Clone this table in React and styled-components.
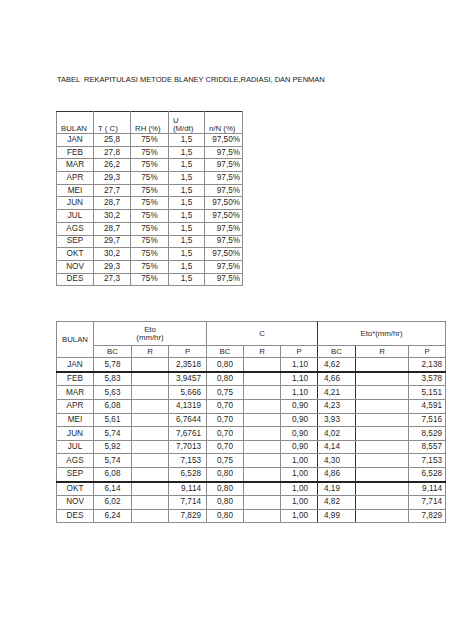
import React from 'react';
import styled, { createGlobalStyle } from 'styled-components';

const GlobalStyle = createGlobalStyle`
  html, body {
    margin: 0;
    padding: 0;
    background: #fff;
  }
  body {
    font-family: "Liberation Sans", Arial, sans-serif;
    color: #1f1f1f;
  }
`;

const Page = styled.div`
  width: 474px;
  height: 632px;
  box-sizing: border-box;
  padding: 76px 0 0 57px;
  background: #fff;
`;

const Title = styled.div`
  font-size: 7.5px;
  line-height: 8px;
  white-space: pre;
  color: #1a1a1a;
`;

const Table = styled.table`
  border-collapse: collapse;
  table-layout: fixed;
  margin-top: ${(p) => p.$top}px;
  margin-left: -1px;
  font-size: 8.2px;
  color: #1f1f1f;
  border: 1.5px solid #333;
`;

const Cell = styled.td`
  padding: 0 ${(p) => p.$pad ?? 2}px;
  height: ${(p) => p.$h}px;
  line-height: 8px;
  border: 1px solid #8c8c8c;
  text-align: ${(p) => p.$align || 'center'};
  vertical-align: ${(p) => p.$valign || 'middle'};
  white-space: nowrap;
  overflow: hidden;
  ${(p) => p.$thickBottom && 'border-bottom: 2px solid #222;'}
  ${(p) => p.$thickRight && 'border-right: 1.5px solid #333;'}
  ${(p) => p.$thickTop && 'border-top: 1.5px solid #333;'}
`;

const Head = styled(Cell)`
  font-size: 7.8px;
  color: #2a2a2a;
`;

const months = ['JAN', 'FEB', 'MAR', 'APR', 'MEI', 'JUN', 'JUL', 'AGS', 'SEP', 'OKT', 'NOV', 'DES'];

const topRows = [
  ['25,8', '75%', '1,5', '97,50%'],
  ['27,8', '75%', '1,5', '97,5%'],
  ['26,2', '75%', '1,5', '97,5%'],
  ['29,3', '75%', '1,5', '97,5%'],
  ['27,7', '75%', '1,5', '97,5%'],
  ['28,7', '75%', '1,5', '97,50%'],
  ['30,2', '75%', '1,5', '97,50%'],
  ['28,7', '75%', '1,5', '97,5%'],
  ['29,7', '75%', '1,5', '97,5%'],
  ['30,2', '75%', '1,5', '97,50%'],
  ['29,3', '75%', '1,5', '97,5%'],
  ['27,3', '75%', '1,5', '97,5%'],
];

const bottomRows = [
  ['5,78', '2,3518', '0,80', '1,10', '4,62', '2,138'],
  ['5,83', '3,9457', '0,80', '1,10', '4,66', '3,578'],
  ['5,63', '5,666', '0,75', '1,10', '4,21', '5,151'],
  ['6,08', '4,1319', '0,70', '0,90', '4,23', '4,591'],
  ['5,61', '6,7644', '0,70', '0,90', '3,93', '7,516'],
  ['5,74', '7,6761', '0,70', '0,90', '4,02', '8,529'],
  ['5,92', '7,7013', '0,70', '0,90', '4,14', '8,557'],
  ['5,74', '7,153', '0,75', '1,00', '4,30', '7,153'],
  ['6,08', '6,528', '0,80', '1,00', '4,86', '6,528'],
  ['6,14', '9,114', '0,80', '1,00', '4,19', '9,114'],
  ['6,02', '7,714', '0,80', '1,00', '4,82', '7,714'],
  ['6,24', '7,829', '0,80', '1,00', '4,99', '7,829'],
];

const topCols = [37, 37, 38, 36, 38];
const bottomCols = [37, 38, 37, 38, 37, 37, 37, 38, 53, 37];

function SummaryTable() {
  return (
    <Table $top={27}>
      <colgroup>
        {topCols.map((w, i) => <col key={i} style={{ width: w }} />)}
      </colgroup>
      <tbody>
        <tr>
          <Head $h={21} $valign="bottom" $align="left" $pad={4} $thickTop>BULAN</Head>
          <Head $h={21} $valign="bottom" $align="left" $pad={4} $thickTop>T ( C)</Head>
          <Head $h={21} $valign="bottom" $align="left" $pad={4} $thickTop>RH (%)</Head>
          <Head $h={21} $valign="bottom" $align="left" $pad={4} $thickTop>U<br />(M/dt)</Head>
          <Head $h={21} $valign="bottom" $align="left" $pad={4} $thickTop>n/N (%)</Head>
        </tr>
        {topRows.map((r, i) => (
          <tr key={months[i]}>
            <Cell $h={11.7}>{months[i]}</Cell>
            <Cell $h={11.7}>{r[0]}</Cell>
            <Cell $h={11.7}>{r[1]}</Cell>
            <Cell $h={11.7}>{r[2]}</Cell>
            <Cell $h={11.7} $align="right" $pad={2}>{r[3]}</Cell>
          </tr>
        ))}
      </tbody>
    </Table>
  );
}

function EtoTable() {
  return (
    <Table $top={35}>
      <colgroup>
        {bottomCols.map((w, i) => <col key={i} style={{ width: w }} />)}
      </colgroup>
      <tbody>
        <tr>
          <Head rowSpan={2} $h={23}>BULAN</Head>
          <Head colSpan={3} $h={23}>Eto<br />(mm/hr)</Head>
          <Head colSpan={3} $h={23} $thickRight>C</Head>
          <Head colSpan={3} $h={23}>Eto*(mm/hr)</Head>
        </tr>
        <tr>
          <Head $h={11}>BC</Head>
          <Head $h={11}>R</Head>
          <Head $h={11}>P</Head>
          <Head $h={11}>BC</Head>
          <Head $h={11}>R</Head>
          <Head $h={11} $thickRight>P</Head>
          <Head $h={11} $thickRight>BC</Head>
          <Head $h={11}>R</Head>
          <Head $h={11}>P</Head>
        </tr>
        {bottomRows.map((r, i) => {
          const tb = i === 0 || i === 8;
          return (
            <tr key={months[i]}>
              <Cell $h={12.6} $thickBottom={tb}>{months[i]}</Cell>
              <Cell $h={12.6} $thickBottom={tb}>{r[0]}</Cell>
              <Cell $h={12.6} $thickBottom={tb} />
              <Cell $h={12.6} $thickBottom={tb} $align="right" $pad={5}>{r[1]}</Cell>
              <Cell $h={12.6} $thickBottom={tb}>{r[2]}</Cell>
              <Cell $h={12.6} $thickBottom={tb} />
              <Cell $h={12.6} $thickBottom={tb} $thickRight $align="right" $pad={9}>{r[3]}</Cell>
              <Cell $h={12.6} $thickBottom={tb} $thickRight $align="left" $pad={6}>{r[4]}</Cell>
              <Cell $h={12.6} $thickBottom={tb} />
              <Cell $h={12.6} $thickBottom={tb} $align="right" $pad={3}>{r[5]}</Cell>
            </tr>
          );
        })}
      </tbody>
    </Table>
  );
}

export default function App() {
  return (
    <>
      <GlobalStyle />
      <Page>
        <Title>TABEL  REKAPITULASI METODE BLANEY CRIDDLE,RADIASI, DAN PENMAN</Title>
        <SummaryTable />
        <EtoTable />
      </Page>
    </>
  );
}
